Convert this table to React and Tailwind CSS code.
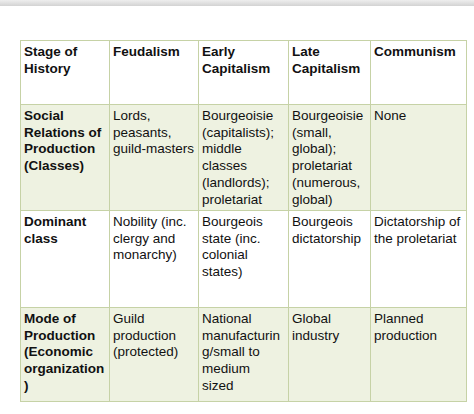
import React from "react";

const cols = ["w-[89px]", "w-[89px]", "w-[90px]", "w-[82px]", "w-[96px]"];

const header = ["Stage of History", "Feudalism", "Early Capitalism", "Late Capitalism", "Communism"];

const rows = [
  {
    shaded: true,
    h: "h-[106px]",
    cells: [
      "Social Relations of Production (Classes)",
      "Lords, peasants, guild-masters",
      "Bourgeoisie (capitalists); middle classes (landlords); proletariat",
      "Bourgeoisie (small, global); proletariat (numerous, global)",
      "None",
    ],
  },
  {
    shaded: false,
    h: "h-[97px]",
    cells: [
      "Dominant class",
      "Nobility (inc. clergy and monarchy)",
      "Bourgeois state (inc. colonial states)",
      "Bourgeois dictatorship",
      "Dictatorship of the proletariat",
    ],
  },
  {
    shaded: true,
    h: "h-[94px]",
    cells: [
      "Mode of Production (Economic organization )",
      "Guild production (protected)",
      "National manufacturin g/small to medium sized",
      "Global industry",
      "Planned production",
    ],
  },
];

export default function App() {
  return (
    <div className="w-[474px] h-[414px] bg-white font-['Liberation_Sans',Arial,sans-serif] text-[13.5px] leading-[16.7px] text-[#111]">
      <div className="h-[6px] bg-gradient-to-b from-[#eeeeee] to-[#d3d3d3]" />
      <table className="ml-[20px] mt-[34px] w-[446px] table-fixed border-collapse">
        <colgroup>
          {cols.map((c, i) => (
            <col key={i} className={c} />
          ))}
        </colgroup>
        <thead>
          <tr className="h-[64px] bg-white">
            {header.map((t, i) => (
              <th
                key={i}
                className="border border-[#c6d2a6] align-top text-left font-bold px-[3px] pt-[3px]"
              >
                {t}
              </th>
            ))}
          </tr>
        </thead>
        <tbody>
          {rows.map((r, ri) => (
            <tr key={ri} className={`${r.h} ${r.shaded ? "bg-[#eef2e1]" : "bg-white"}`}>
              {r.cells.map((t, i) => (
                <td
                  key={i}
                  className={`border border-[#c6d2a6] align-top px-[3px] pt-[3px] ${i === 0 ? "font-bold" : ""}`}
                >
                  {t}
                </td>
              ))}
            </tr>
          ))}
        </tbody>
      </table>
    </div>
  );
}
